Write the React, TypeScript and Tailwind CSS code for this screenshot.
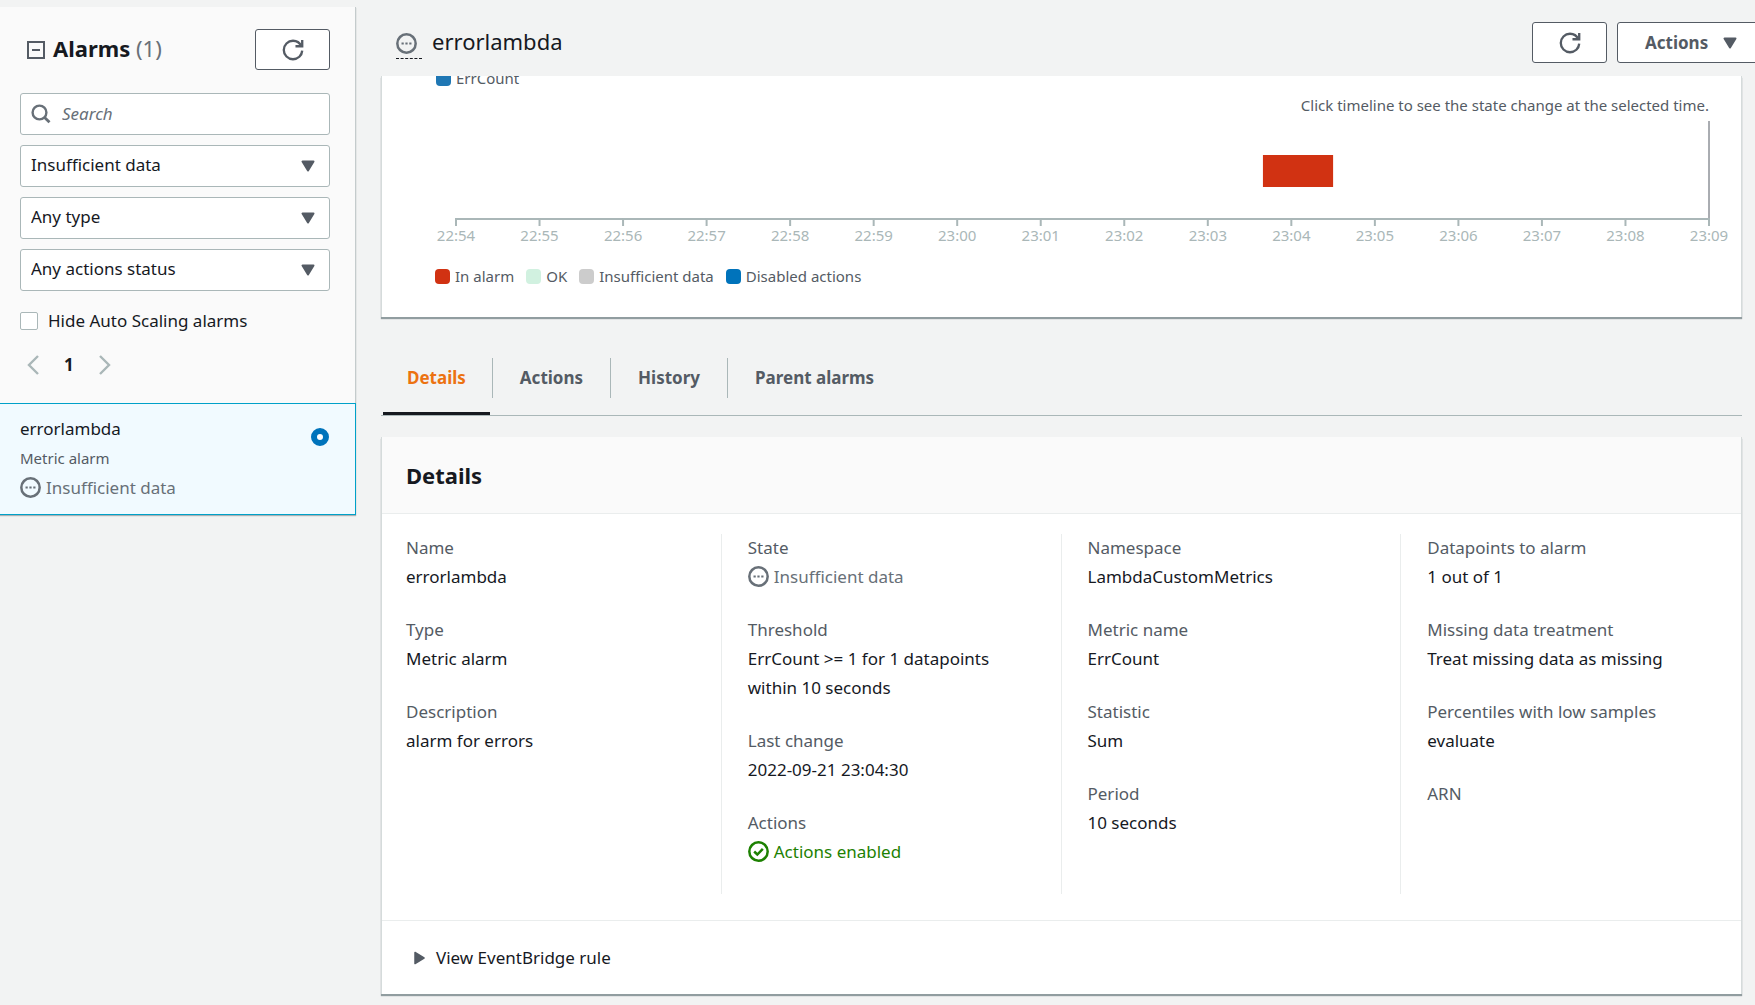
import type { ReactNode } from "react";

const STATE_LEGEND = [
  { label: "In alarm", color: "bg-[#d13212]" },
  { label: "OK", color: "bg-[#d1f1e0]" },
  { label: "Insufficient data", color: "bg-[#cccccc]" },
  { label: "Disabled actions", color: "bg-[#0073bb]" },
];

const TIMES = [
  "22:54", "22:55", "22:56", "22:57", "22:58", "22:59", "23:00", "23:01",
  "23:02", "23:03", "23:04", "23:05", "23:06", "23:07", "23:08", "23:09",
];

const FILTERS = [
  { name: "Alarm state", value: "Insufficient data" },
  { name: "Alarm type", value: "Any type" },
  { name: "Actions status", value: "Any actions status" },
];

const TABS = ["Details", "Actions", "History", "Parent alarms"];

function RefreshIcon() {
  return (
    <svg viewBox="0 0 16 16" className="size-[22px]" fill="none" stroke="currentColor" strokeWidth="1.700" aria-hidden="true">
      <path d="M14.700 8.500c-.2 3.500-3.100 6.200-6.700 6.200-3.700 0-6.700-3-6.700-6.700s3-6.700 6.700-6.700c2.700 0 5 1.600 6.100 3.900" />
      <path d="M9.800 5.300h4.900V.8" />
    </svg>
  );
}

function PendingIcon() {
  return (
    <svg viewBox="0 0 16 16" className="size-[21px] shrink-0" fill="none" stroke="currentColor" aria-hidden="true">
      <circle cx="8" cy="8" r="7" strokeWidth="1.900" />
      <path d="M4.200 8h1.700M7.150 8h1.700M10.100 8h1.700" strokeWidth="1.700" />
    </svg>
  );
}

function CheckIcon() {
  return (
    <svg viewBox="0 0 16 16" className="size-[21px] shrink-0" fill="none" stroke="currentColor" strokeWidth="1.900" aria-hidden="true">
      <circle cx="8" cy="8" r="7" />
      <path d="M4.700 8l2.400 2.300 4.200-4.300" />
    </svg>
  );
}

function CaretDown({ className = "" }) {
  return (
    <svg viewBox="0 0 14 12" className={`h-3 w-3.5 ${className}`} fill="currentColor" stroke="currentColor" strokeLinejoin="round" aria-hidden="true">
      <path d="M1.500 1.500h11L7 10.500z" strokeWidth="2" />
    </svg>
  );
}

function Insufficient() {
  return (
    <span className="flex items-center gap-[5px] text-[#687078]">
      <PendingIcon />
      Insufficient data
    </span>
  );
}

function Sidebar() {
  return (
    <aside className="mt-[7px] w-[356px] shrink-0 self-start border-r border-[#c4cbcc] bg-[#fafafa] shadow-[0_1px_1px_0_rgba(0,28,36,0.3)]">
      <div className="px-5 pt-[22px] pb-6 pr-[25px]">
        <div className="flex items-center justify-between">
          <h2 className="flex items-center gap-2 pb-1 pl-[7px] text-[22px] font-bold text-[#16191f]">
            <svg viewBox="0 0 18 18" className="mt-1 size-[18px] text-[#545b64]" fill="none" stroke="currentColor" strokeWidth="2" aria-hidden="true">
              <path d="M1 1h16v16H1zM5 9h8" />
            </svg>
            <span>
              Alarms <span className="font-normal text-[#687078]">(1)</span>
            </span>
          </h2>
          <button aria-label="Refresh alarms" className="flex h-[41px] w-[75px] items-center justify-center rounded-[3px] border border-[#545b64] bg-white text-[#545b64]">
            <RefreshIcon />
          </button>
        </div>

        <div className="mt-[23px] flex flex-col gap-2.5">
          <label className="flex h-[42px] items-center gap-[11px] rounded-[3px] border border-[#aab7b8] bg-white px-2.5">
            <svg viewBox="0 0 20 20" className="size-5 text-[#687078]" fill="none" stroke="currentColor" strokeWidth="2.400" aria-hidden="true">
              <circle cx="8.500" cy="8.500" r="6.900" />
              <path d="M13.300 13.300l5.200 5" strokeWidth="2.800" />
            </svg>
            <input
              type="search"
              placeholder="Search"
              aria-label="Search alarms"
              className="min-w-0 flex-1 outline-none placeholder:text-[#687078] placeholder:italic"
            />
          </label>
          {FILTERS.map((f) => (
            <div key={f.name} className="relative">
              <select aria-label={f.name} className="block h-[42px] w-full appearance-none rounded-[3px] border border-[#aab7b8] bg-white px-2.5 pb-0.5">
                <option>{f.value}</option>
              </select>
              <CaretDown className="pointer-events-none absolute top-[15px] right-[15px] text-[#545b64]" />
            </div>
          ))}
        </div>

        <label className="mt-4 flex items-center gap-2.5">
          <input type="checkbox" className="size-[18px] appearance-none rounded-[2px] border border-[#aab7b8] bg-white" />
          Hide Auto Scaling alarms
        </label>

        <nav aria-label="Pagination" className="mt-4 flex items-center gap-[25px] pl-[7px] text-[#aab7b8]">
          <button aria-label="Previous page">
            <svg viewBox="0 0 12 20" className="h-5 w-3" fill="none" stroke="currentColor" strokeWidth="2.400">
              <path d="M11 1L2 10l9 9" />
            </svg>
          </button>
          <button className="font-bold text-[#16191f]" aria-current="page">1</button>
          <button aria-label="Next page">
            <svg viewBox="0 0 12 20" className="h-5 w-3" fill="none" stroke="currentColor" strokeWidth="2.400">
              <path d="M1 1l9 9-9 9" />
            </svg>
          </button>
        </nav>
      </div>

      <label className="-mr-px flex items-start justify-between border border-l-0 border-[#00a1c9] bg-[#f1faff] pt-2.5 pr-[26px] pb-3 pl-5">
        <span className="flex flex-col">
          <span className="leading-[29px]">errorlambda</span>
          <span className="text-[15px] leading-[30px] text-[#545b64]">Metric alarm</span>
          <span className="leading-[29px]"><Insufficient /></span>
        </span>
        <input type="radio" name="alarm" defaultChecked className="mt-3.5 size-[18px] appearance-none rounded-full border-[6px] border-[#0073bb] bg-white" />
      </label>
    </aside>
  );
}

function LegendItem({ color, label }: { color: string; label: string }) {
  return (
    <li className="flex items-center gap-[5px]">
      <span className={`size-[15px] rounded-[4px] ${color}`} />
      {label}
    </li>
  );
}

function Timeline() {
  return (
    <section className="overflow-hidden border-x border-[#d5dbdb] bg-white text-[15px] text-[#545b64] shadow-[0_2px_1px_0_rgba(0,28,36,0.4)]">
      <ul className="-mt-[9px] flex px-[54px] leading-[22px]">
        <LegendItem color="bg-[#1f77b4]" label="ErrCount" />
      </ul>
      <p className="mt-[5px] pr-8 text-right leading-[22px]">
        Click timeline to see the state change at the selected time.
      </p>
      <div className="pt-[5px] pr-8 pl-[74px]">
        <svg className="block h-[126px] w-full overflow-visible" role="img" aria-label="Alarm state timeline">
          <rect x="64.4%" y="34" width="5.6%" height="32" fill="#d13212" />
          <line x1="100%" x2="100%" y1="0" y2="97" stroke="#545b64" />
          <line x1="0" x2="100%" y1="98" y2="98" stroke="#aab7b8" strokeWidth="2" />
          {TIMES.map((t, i) => {
            const x = `${(i * 100) / (TIMES.length - 1)}%`;
            return (
              <g key={t}>
                <line x1={x} x2={x} y1="97" y2="105" stroke="#aab7b8" strokeWidth="2" />
                <text x={x} y="120" textAnchor="middle" fill="#aab7b8">{t}</text>
              </g>
            );
          })}
        </svg>
      </div>
      <ul className="mt-[18px] flex gap-3 px-[53px] pb-[30px] leading-[22px]">
        {STATE_LEGEND.map((s) => (
          <LegendItem key={s.label} {...s} />
        ))}
      </ul>
    </section>
  );
}

function Tabs() {
  return (
    <div role="tablist" className="mt-[41px] flex border-b border-[#aab7b8] font-bold text-[#545b64]">
      {TABS.map((tab, i) => (
        <div key={tab} className="flex items-start">
          {i > 0 && <span className="h-10 w-px bg-[#aab7b8]" />}
          <button
            role="tab"
            aria-selected={i === 0}
            className={
              i === 0
                ? "mx-0.5 h-[57px] border-b-[3px] border-[#16191f] px-6 pb-[14px] text-[#ec7211]"
                : "h-[57px] px-[27px] pb-[17px]"
            }
          >
            {tab}
          </button>
        </div>
      ))}
    </div>
  );
}

function Column({ children }: { children: ReactNode }) {
  return <dl className="flex flex-col gap-[25px] border-r border-[#eaeded] pr-10 pl-[26px] first:pl-6 last:border-r-0">{children}</dl>;
}

function Field({ label, children }: { label: string; children?: ReactNode }) {
  return (
    <div>
      <dt className="leading-7 text-[#545b64]">{label}</dt>
      <dd className="leading-[29px]">{children}</dd>
    </div>
  );
}

function Details() {
  return (
    <section className="mt-[21px] border-x border-[#d5dbdb] bg-white shadow-[0_2px_1px_0_rgba(0,28,36,0.4)]">
      <h2 className="border-b border-[#eaeded] bg-[#fafafa] px-6 py-[22px] text-[22px] leading-8 font-bold">Details</h2>
      <div className="grid grid-cols-4 pt-5 pb-[26px]">
        <Column>
          <Field label="Name">errorlambda</Field>
          <Field label="Type">Metric alarm</Field>
          <Field label="Description">alarm for errors</Field>
        </Column>
        <Column>
          <Field label="State"><Insufficient /></Field>
          <Field label="Threshold">ErrCount &gt;= 1 for 1 datapoints within 10 seconds</Field>
          <Field label="Last change">2022-09-21 23:04:30</Field>
          <div className="pb-7">
            <Field label="Actions">
              <span className="flex items-center gap-[5px] text-[#1d8102]">
                <CheckIcon />
                Actions enabled
              </span>
            </Field>
          </div>
        </Column>
        <Column>
          <Field label="Namespace">LambdaCustomMetrics</Field>
          <Field label="Metric name">ErrCount</Field>
          <Field label="Statistic">Sum</Field>
          <Field label="Period">10 seconds</Field>
        </Column>
        <Column>
          <Field label="Datapoints to alarm">1 out of 1</Field>
          <Field label="Missing data treatment">Treat missing data as missing</Field>
          <Field label="Percentiles with low samples">evaluate</Field>
          <Field label="ARN" />
        </Column>
      </div>
      <div className="border-t border-[#eaeded] px-8 py-[22px]">
        <button className="flex items-center gap-[11px] leading-[29px]">
          <svg viewBox="0 0 11 14" className="h-3.5 w-[11px] text-[#545b64]" fill="currentColor" stroke="currentColor" strokeLinejoin="round" aria-hidden="true">
            <path d="M1 1.500L10 7l-9 5.500z" strokeWidth="1.500" />
          </svg>
          View EventBridge rule
        </button>
      </div>
    </section>
  );
}

export default function App() {
  return (
    <div className="flex min-h-screen bg-[#f2f3f3] font-['Noto_Sans',sans-serif] text-[17px] leading-7 text-[#16191f]">
      <Sidebar />
      <main className="min-w-0 flex-1 overflow-x-clip pr-[13px] pb-2 pl-[25px]">
        {/* the toolbar runs past the right edge of the window */}
        <header className="-mr-6 flex h-[76px] items-start gap-2.5 pt-[22px] pl-[15px]">
          <span className="mt-[11px] w-[26px] border-b border-dashed border-[#16191f] pb-[4px] text-[#687078]">
            <PendingIcon />
          </span>
          <h1 className="flex-1 text-[22px] leading-[38px]">errorlambda</h1>
          <button aria-label="Refresh" className="flex h-[41px] w-[75px] items-center justify-center rounded-[3px] border border-[#545b64] bg-white text-[#545b64]">
            <RefreshIcon />
          </button>
          <button className="flex h-[41px] w-[149px] items-center gap-[15px] rounded-[3px] border border-[#545b64] bg-white px-[27px] font-bold text-[#545b64]">
            Actions
            <CaretDown />
          </button>
        </header>
        <Timeline />
        <Tabs />
        <Details />
      </main>
    </div>
  );
}
